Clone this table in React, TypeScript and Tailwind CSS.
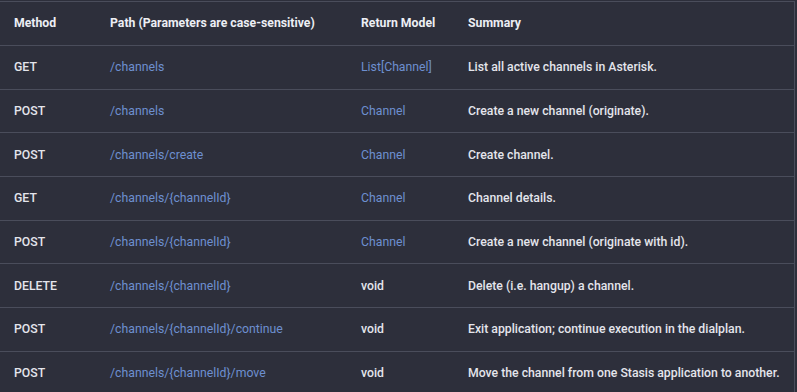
const rows: { method: string; path: string; model: string; link: boolean; summary: string }[] = [
  { method: 'GET', path: '/channels', model: 'List[Channel]', link: true, summary: 'List all active channels in Asterisk.' },
  { method: 'POST', path: '/channels', model: 'Channel', link: true, summary: 'Create a new channel (originate).' },
  { method: 'POST', path: '/channels/create', model: 'Channel', link: true, summary: 'Create channel.' },
  { method: 'GET', path: '/channels/{channelId}', model: 'Channel', link: true, summary: 'Channel details.' },
  { method: 'POST', path: '/channels/{channelId}', model: 'Channel', link: true, summary: 'Create a new channel (originate with id).' },
  { method: 'DELETE', path: '/channels/{channelId}', model: 'void', link: false, summary: 'Delete (i.e. hangup) a channel.' },
  { method: 'POST', path: '/channels/{channelId}/continue', model: 'void', link: false, summary: 'Exit application; continue execution in the dialplan.' },
  { method: 'POST', path: '/channels/{channelId}/move', model: 'void', link: false, summary: 'Move the channel from one Stasis application to another.' },
];

export default function App() {
  return (
    <div className="h-[392px] w-[797px] overflow-hidden bg-[#2d2f3b] pt-px font-['Roboto',sans-serif] text-[12.25px] text-[#e4e5ec]">
      <div className="w-[795px] border-t border-r border-[#4a4d5b]">
        <div className="grid h-[44px] grid-cols-[110px_251px_107px_1fr] items-center border-b border-[#4a4d5b] font-bold text-[#eceef4]">
          <div className="pl-[14px]">Method</div>
          <div>Path (Parameters are case-sensitive)</div>
          <div>Return Model</div>
          <div>Summary</div>
        </div>
        {rows.map((r, i) => (
          <div
            key={i}
            className="grid h-[43.7px] grid-cols-[110px_251px_107px_1fr] items-center border-b border-[#4a4d5b]"
          >
            <div className="pl-[14px] font-medium">{r.method}</div>
            <div className="text-[#6d8fd0]">{r.path}</div>
            <div className={r.link ? 'text-[#6d8fd0]' : 'font-medium'}>{r.model}</div>
            <div className="font-medium">{r.summary}</div>
          </div>
        ))}
      </div>
    </div>
  );
}
